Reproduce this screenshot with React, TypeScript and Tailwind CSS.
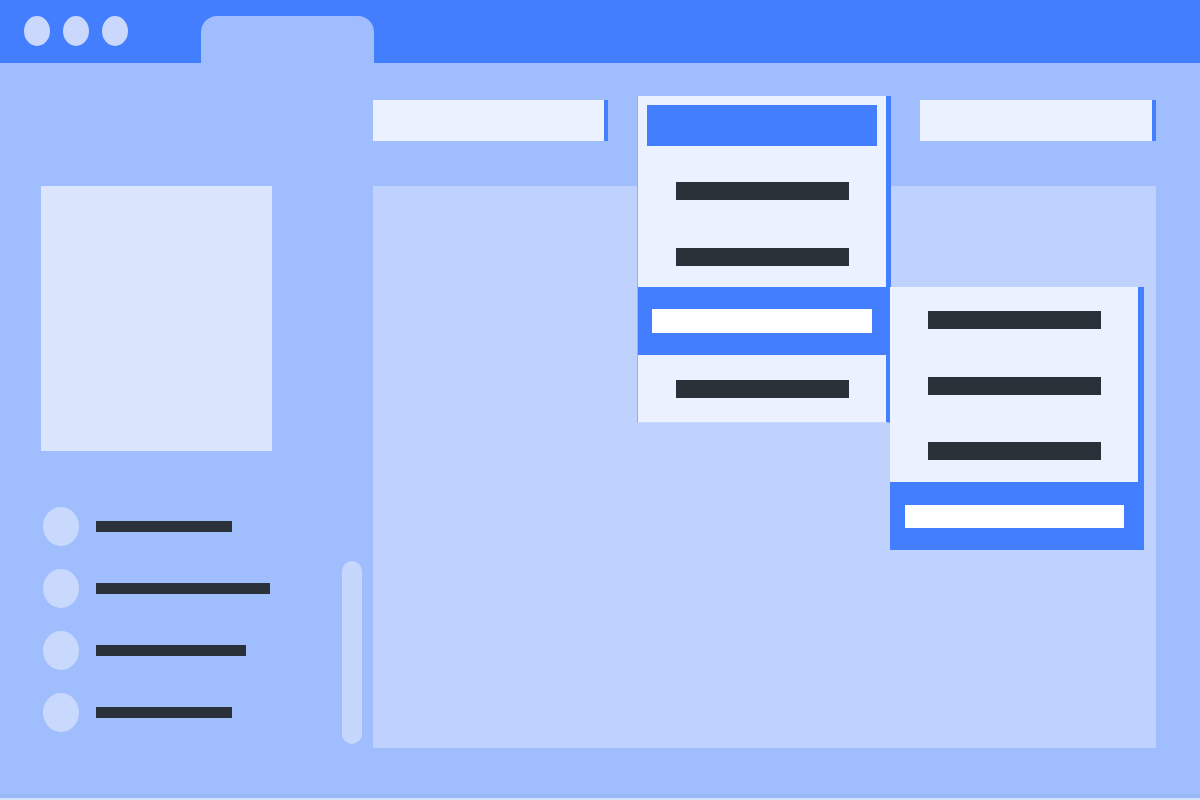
import React from 'react'

const menuBar = 'h-[18px] w-[173px] bg-[#2b3139]'

function Dropdown() {
  return (
    <div className="absolute -top-[4px] left-0 flex w-[254px] flex-col items-center border-r-[5px] border-l border-b border-[#4380ff] border-l-[#8fb0f5] border-b-[#c9d8fb] bg-[#ebf1fe] pt-[9px] pb-[24px]">
      <div className="h-[41px] w-[230px] bg-[#437eff]" />
      <div className={`mt-[36px] ${menuBar}`} />
      <div className={`mt-[48px] ${menuBar}`} />
      <div className="mt-[21px] flex h-[68px] w-full items-center justify-center bg-[#437eff]">
        <div className="h-[24px] w-[220px] bg-white" />
      </div>
      <div className={`mt-[25px] ${menuBar}`} />
    </div>
  )
}

function Submenu() {
  return (
    <div className="absolute top-[187px] left-[253px] flex w-[254px] flex-col items-center border-r-[6px] border-[#4380ff] bg-[#ebf1fe] pt-[24px]">
      <div className={menuBar} />
      <div className={`mt-[48px] ${menuBar}`} />
      <div className={`mt-[47px] ${menuBar}`} />
      <div className="mt-[22px] flex h-[68px] w-full items-center justify-center bg-[#437eff]">
        <div className="h-[23px] w-[219px] bg-white" />
      </div>
    </div>
  )
}

function ListRow({ width }: { width: string }) {
  return (
    <div className="flex h-[39px] items-center">
      <div className="ml-[2px] h-[39px] w-[36px] rounded-[50%] bg-[#c9d9fd]" />
      <div className={`ml-[17px] h-[11px] bg-[#2b3139] ${width}`} />
    </div>
  )
}

export default function App() {
  return (
    <div className="flex h-[800px] w-[1200px] flex-col overflow-hidden bg-[#d3e2fd]">
      {/* Title bar */}
      <div className="flex h-[63px] shrink-0 bg-[#437eff]">
        <div className="flex h-[63px] items-center gap-[13px] pl-[24px] pb-[1px]">
          <div className="h-[30px] w-[26px] rounded-[50%] bg-[#c9d8fc]" />
          <div className="h-[30px] w-[26px] rounded-[50%] bg-[#c9d8fc]" />
          <div className="h-[30px] w-[26px] rounded-[50%] bg-[#c9d8fc]" />
        </div>
        <div className="ml-[73px] h-[47px] w-[173px] self-end rounded-t-[16px] bg-[#a0bdfd]" />
      </div>

      {/* Window body */}
      <div className="flex h-[735px] shrink-0 border-b-[4px] border-[#99b6f7] bg-[#a0bdfd]">
        {/* Sidebar */}
        <div className="flex w-[373px] shrink-0">
          <div className="flex flex-col pt-[123px] pl-[41px]">
            <div className="h-[265px] w-[231px] bg-[#dbe6fe]" />
            <div className="mt-[56px] flex flex-col gap-[23px]">
              <ListRow width="w-[136px]" />
              <ListRow width="w-[174px]" />
              <ListRow width="w-[150px]" />
              <ListRow width="w-[136px]" />
            </div>
          </div>
          <div className="mb-[50px] ml-[70px] h-[183px] w-[20px] self-end rounded-full bg-[#c6d7fd]" />
        </div>

        {/* Main column */}
        <div className="flex flex-col pt-[37px]">
          <div className="flex h-[41px] gap-[29px]">
            <div className="h-[41px] w-[235px] border-r-4 border-[#4380ff] bg-[#ebf1fe]" />
            <div className="relative z-10 h-[41px] w-[254px]">
              <Dropdown />
              <Submenu />
            </div>
            <div className="h-[41px] w-[236px] border-r-4 border-[#4380ff] bg-[#ebf1fe]" />
          </div>
          <div className="mt-[45px] h-[562px] w-[783px] bg-[#bfd2fe]" />
        </div>
      </div>
    </div>
  )
}
